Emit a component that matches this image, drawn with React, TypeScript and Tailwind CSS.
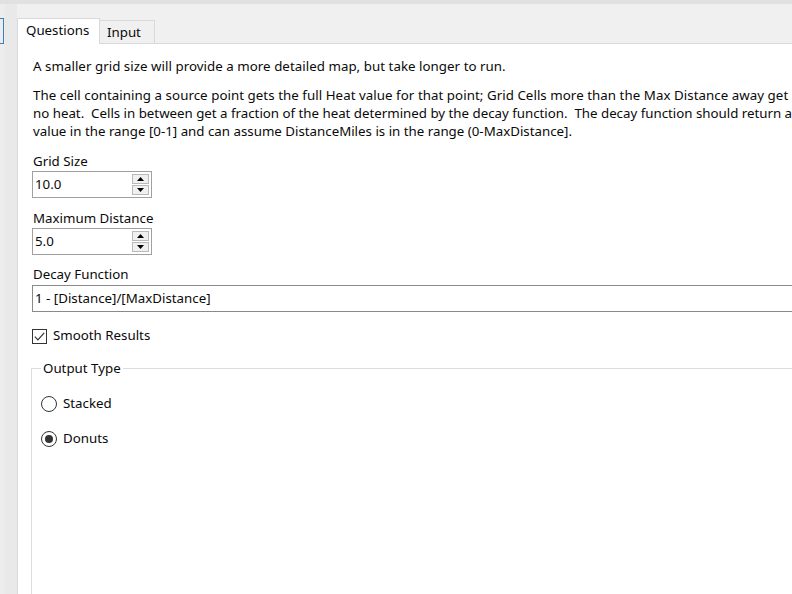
import React from 'react'

const font = { fontFamily: '"Noto Sans", "Open Sans", sans-serif' }

function Spinner() {
  return (
    <div className="absolute top-[2px] right-[2px] bottom-[2px] flex w-[17px] flex-col gap-px">
      <div className="flex flex-1 items-center justify-center border border-[#b9b9b9] bg-[#f0f0f0]">
        <svg width="7" height="4" viewBox="0 0 7 4">
          <path d="M0 4 L3.5 0 L7 4 Z" fill="#000" />
        </svg>
      </div>
      <div className="flex flex-1 items-center justify-center border border-[#b9b9b9] bg-[#f0f0f0]">
        <svg width="7" height="4" viewBox="0 0 7 4">
          <path d="M0 0 L3.5 4 L7 0 Z" fill="#000" />
        </svg>
      </div>
    </div>
  )
}

function NumberField({ label, value, top }: { label: string; value: string; top: string }) {
  return (
    <div className={top}>
      <div className="h-[18px] pl-px leading-[18px]">{label}</div>
      <div className="relative mt-px h-[27px] w-[120px] border border-[#a0a0a0] bg-white pl-[2px] leading-[25px]">
        {value}
        <Spinner />
      </div>
    </div>
  )
}

function Radio({ label, checked }: { label: string; checked?: boolean }) {
  return (
    <div className="flex h-[18px] items-center gap-[6px]">
      <span className="flex h-[16px] w-[16px] items-center justify-center rounded-full border border-[#333] bg-white">
        {checked && <span className="h-[8px] w-[8px] rounded-full bg-[#333]" />}
      </span>
      <span>{label}</span>
    </div>
  )
}

export default function App() {
  return (
    <div
      className="flex h-[594px] w-[792px] flex-col overflow-hidden bg-[#f0f0f0] text-[13.3px] text-[#0a0a0a]"
      style={font}
    >
      <div className="h-[4px] shrink-0 bg-[#e1e1e1]" />
      <div className="flex min-h-0 flex-1">
        {/* left gutter with cut-off selected control */}
        <div className="flex w-[17px] shrink-0">
          <div className="w-[5px] bg-[#ededed] pt-[14px]">
            <div className="h-[26px] w-[4px] border-y border-r border-[#3a7fc4]" />
          </div>
          <div className="flex-1 bg-[#e9e9e9]" />
        </div>

        <div className="flex min-w-0 flex-1 flex-col">
          {/* tab strip */}
          <div className="flex h-[39px] shrink-0 items-end">
            <div className="relative z-10 -mb-px flex h-[26px] w-[83px] items-center border border-b-0 border-[#d9d9d9] bg-white pb-[2px] pl-[8px]">
              Questions
            </div>
            <div className="flex h-[23px] w-[55px] items-center border border-l-0 border-b-0 border-[#d9d9d9] bg-[#f0f0f0] pt-[2px] pl-[7px]">
              Input
            </div>
          </div>

          {/* tab panel */}
          <div className="flex min-h-0 flex-1 flex-col overflow-hidden border-t border-l border-[#d9d9d9] bg-white pt-[13px] pl-[14px]">
            <div className="flex w-[800px] flex-1 flex-col">
              <div className="pl-px leading-[18px]">
                <p className="tracking-[0.04px] whitespace-nowrap">
                  A smaller grid size will provide a more detailed map, but take longer to run.
                </p>
                <p className="mt-[11px] whitespace-pre">
                  <span className="block tracking-[0.05px]">
                    The cell containing a source point gets the full Heat value for that point; Grid Cells more than the Max Distance away get
                  </span>
                  <span className="block tracking-[-0.01px]">
                    {'no heat.  Cells in between get a fraction of the heat determined by the decay function.  The decay function should return a'}
                  </span>
                  <span className="block">
                    value in the range [0-1] and can assume DistanceMiles is in the range (0-MaxDistance].
                  </span>
                </p>
              </div>

              <NumberField label="Grid Size" value="10.0" top="mt-[12px]" />
              <NumberField label="Maximum Distance" value="5.0" top="mt-[11px]" />

              <div className="mt-[10px]">
                <div className="h-[18px] pl-px leading-[18px]">Decay Function</div>
                <div className="mt-[2px] h-[27px] w-full border border-[#8a8a8a] bg-white pl-[2px] leading-[25px]">
                  1 - [Distance]/[MaxDistance]
                </div>
              </div>

              <div className="mt-[15px] flex h-[18px] items-center gap-[6px]">
                <span className="flex h-[15px] w-[15px] items-center justify-center border border-[#333] bg-white">
                  <svg width="11" height="9" viewBox="0 0 11 9">
                    <path d="M0.8 4.6 L3.9 7.8 L10.2 0.8" fill="none" stroke="#333" strokeWidth="1.2" />
                  </svg>
                </span>
                <span>Smooth Results</span>
              </div>

              <fieldset className="mt-[14px] min-h-[260px] flex-1 -translate-x-px border border-[#dcdcdc]">
                <legend className="ml-[9px] px-[2px] leading-[18px]">Output Type</legend>
                <div className="mt-[18px] flex flex-col gap-[17px] pl-[9px]">
                  <Radio label="Stacked" />
                  <Radio label="Donuts" checked />
                </div>
              </fieldset>
            </div>
          </div>
        </div>
      </div>
    </div>
  )
}
